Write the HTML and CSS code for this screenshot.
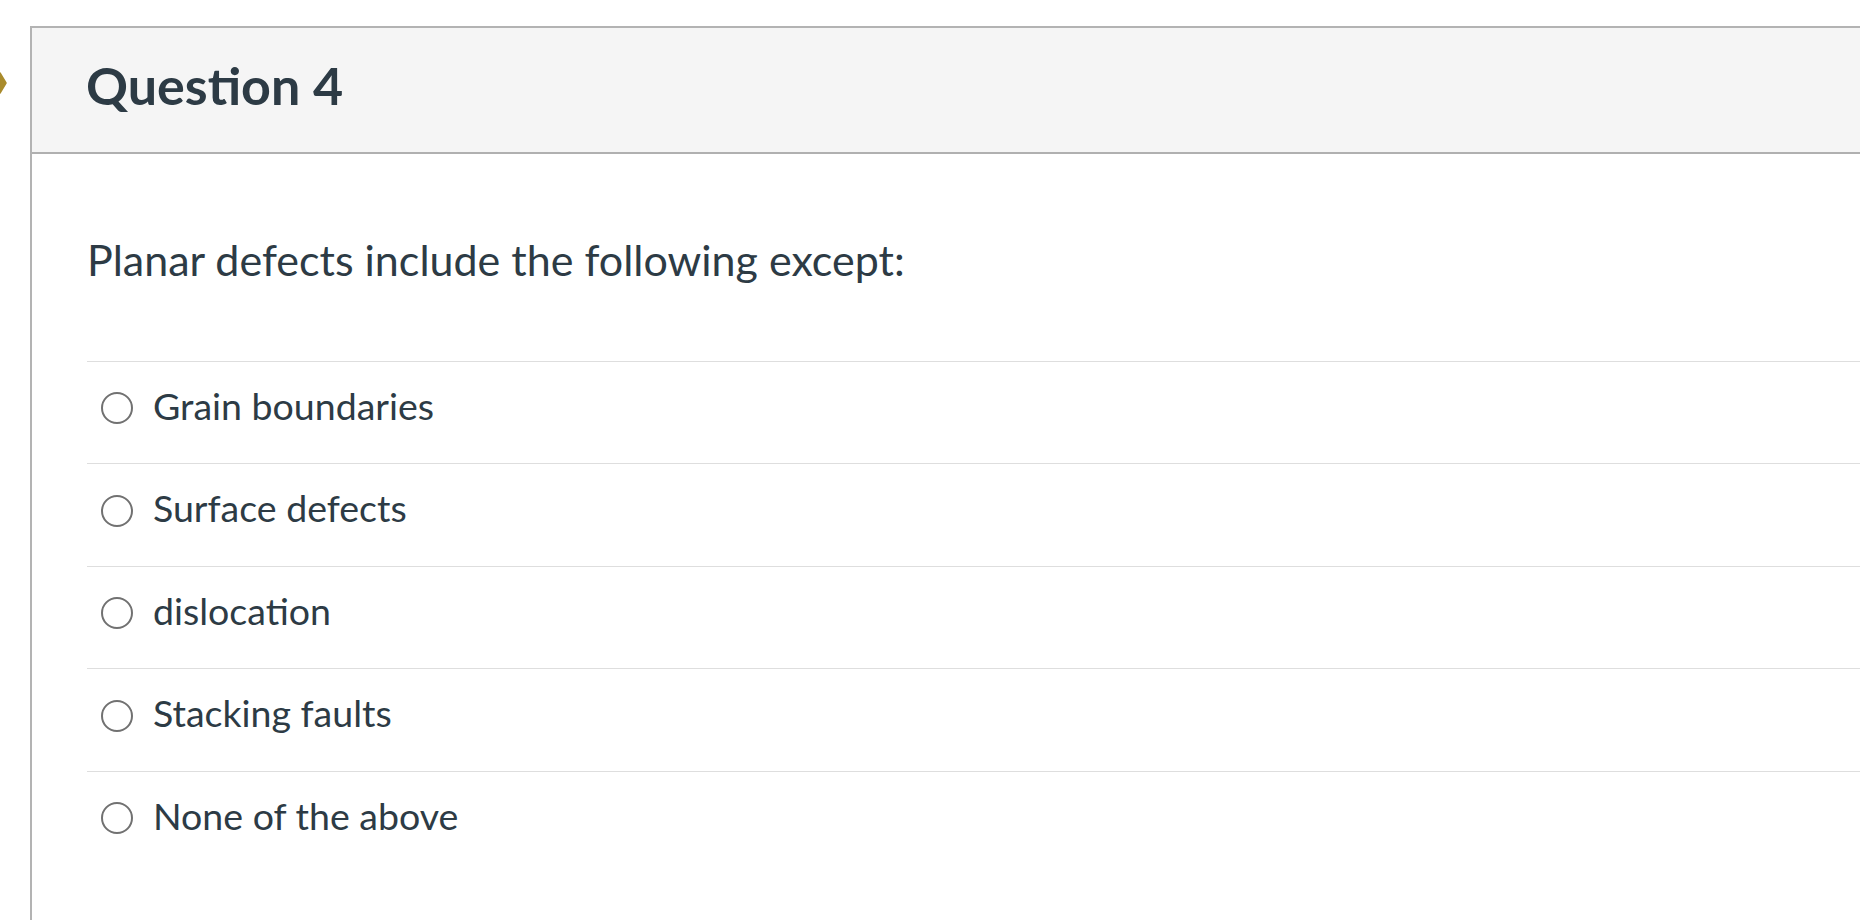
FILE: index.html
```html
<!DOCTYPE html>
<html lang="en">
<head>
<meta charset="utf-8">
<title>Question 4</title>
<link rel="stylesheet" href="styles.css">
</head>
<body>
<div class="page">
  <svg class="marker" width="8" height="24" viewBox="0 0 8 24" aria-hidden="true">
    <polygon points="0,2 6,12 0,22" fill="#a98b2c" stroke="#a98b2c" stroke-width="1.5" stroke-linejoin="round"/>
  </svg>
  <div class="card">
    <div class="card-header">
      <h2 class="title">Question 4</h2>
    </div>
    <div class="card-body">
      <p class="question">Planar defects include the following except:</p>
      <div class="answers">
        <label class="answer"><span class="radio"></span><span class="answer-text">Grain boundaries</span></label>
        <label class="answer"><span class="radio"></span><span class="answer-text">Surface defects</span></label>
        <label class="answer"><span class="radio"></span><span class="answer-text">dislocation</span></label>
        <label class="answer"><span class="radio"></span><span class="answer-text">Stacking faults</span></label>
        <label class="answer"><span class="radio"></span><span class="answer-text">None of the above</span></label>
      </div>
    </div>
  </div>
</div>
</body>
</html>
```

FILE: styles.css
```css
html, body {
  margin: 0;
  padding: 0;
  background: #ffffff;
  overflow: hidden;
  height: 100%;
}

body {
  font-family: "Lato", "Noto Sans", "Liberation Sans", sans-serif;
  color: #2d3b45;
}

.page {
  position: relative;
  padding-top: 26px;
  padding-left: 30px;
}

.marker {
  position: absolute;
  left: 0;
  top: 71px;
}

.card {
  border: 2px solid #b3b3b3;
  border-right: none;
  border-bottom: none;
  margin-right: -40px;
  min-height: 1000px;
  background: #ffffff;
}

.card-header {
  background: #f5f5f5;
  border-bottom: 2px solid #b0b0b0;
  height: 126px;
  box-sizing: border-box;
  display: flex;
  align-items: center;
  padding-left: 54px;
}

.title {
  margin: 0;
  font-size: 52px;
  font-weight: 700;
  line-height: 1.2;
  padding-bottom: 9px;
}

.card-body {
  padding: 80px 0 0 55px;
}

.question {
  margin: 0 0 75px 0;
  font-size: 43px;
  line-height: 1.2;
  font-weight: 400;
}

.answers {
  display: flex;
  flex-direction: column;
}

.answer {
  display: flex;
  align-items: flex-start;
  border-top: 1.5px solid #dedede;
  height: 102.5px;
  box-sizing: border-box;
  padding-top: 22px;
  padding-left: 14px;
}

.radio {
  flex: none;
  width: 32px;
  height: 32px;
  box-sizing: border-box;
  border: 2px solid #717171;
  border-radius: 50%;
  margin-top: 8.5px;
  margin-right: 20px;
}

.answer-text {
  font-size: 37.5px;
  line-height: 43px;
}
```
